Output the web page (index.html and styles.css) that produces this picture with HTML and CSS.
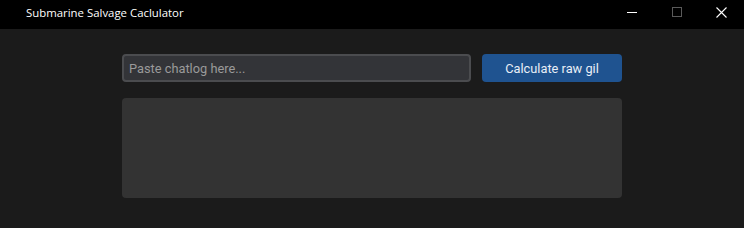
FILE: index.html
```html
<!DOCTYPE html>
<html>
<head>
    <title>Submarine Salvage Caclulator</title>
    <link rel="stylesheet" href="styles.css">
</head>
<body>
    <div class="titlebar">
        <span class="title">Submarine Salvage Caclulator</span>
        <div class="controls">
            <span class="ctl">
                <svg width="10" height="10" viewBox="0 0 10 10"><path d="M0 5.5H10" stroke="#fff" stroke-width="1"/></svg>
            </span>
            <span class="ctl">
                <svg width="10" height="10" viewBox="0 0 10 10"><rect x="0.5" y="0.5" width="9" height="9" fill="none" stroke="#5a5a5a" stroke-width="1"/></svg>
            </span>
            <span class="ctl">
                <svg width="11" height="11" viewBox="0 0 11 11"><path d="M0.5 0.5L10.5 10.5M10.5 0.5L0.5 10.5" stroke="#fff" stroke-width="1.1"/></svg>
            </span>
        </div>
    </div>

    <div class="main">
        <div class="row">
            <input type="text" class="chatlog" placeholder="Paste chatlog here...">
            <button class="calc">Calculate raw gil</button>
        </div>
        <div class="output"></div>
    </div>
</body>
</html>
```

FILE: styles.css
```css
body {
    margin: 0;
    background-color: #1b1b1b;
    font-family: Roboto, "Noto Sans", sans-serif;
    height: 228px;
    overflow: hidden;
}

.titlebar {
    height: 29px;
    background: #000;
    display: flex;
    align-items: center;
    justify-content: space-between;
}

.title {
    font-family: "Open Sans", "Noto Sans", sans-serif;
    font-size: 11.4px;
    color: #fff;
    padding-left: 26px;
    margin-top: -4px;
}

.controls {
    display: flex;
    height: 100%;
}

.ctl {
    width: 45px;
    display: flex;
    align-items: center;
    justify-content: center;
    margin-top: -5px;
}

.main {
    width: 500px;
    margin: 25px auto 0;
}

.row {
    display: flex;
    gap: 11px;
}

.chatlog {
    flex: 1;
    height: 28px;
    box-sizing: border-box;
    background: #333438;
    border: 2px solid #4b4c4f;
    border-radius: 4px;
    color: #ddd;
    font-family: Roboto, sans-serif;
    font-size: 12.8px;
    padding: 0 5px;
    outline: none;
}

.chatlog::placeholder {
    color: #9a9a9a;
}

.calc {
    width: 140px;
    height: 28px;
    background: #1f5390;
    border: none;
    border-radius: 4px;
    color: #e8eef6;
    font-family: Roboto, sans-serif;
    font-size: 12.8px;
    padding: 0;
}

.output {
    margin-top: 16px;
    height: 100px;
    background: #333333;
    border-radius: 4px;
}
```
